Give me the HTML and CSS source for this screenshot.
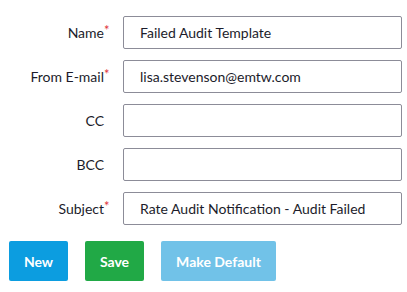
FILE: index.html
```html
<!DOCTYPE html>
<html>
<head>
<meta charset="utf-8">
<link rel="stylesheet" href="styles.css">
</head>
<body>
<form class="form">
  <div class="row">
    <label class="label">Name<span class="req">*</span></label>
    <input class="field" type="text" value="Failed Audit Template">
  </div>
  <div class="row">
    <label class="label">From E-mail<span class="req">*</span></label>
    <input class="field" type="text" value="lisa.stevenson@emtw.com">
  </div>
  <div class="row">
    <label class="label">CC</label>
    <input class="field" type="text" value="">
  </div>
  <div class="row">
    <label class="label">BCC</label>
    <input class="field" type="text" value="">
  </div>
  <div class="row">
    <label class="label">Subject<span class="req">*</span></label>
    <input class="field" type="text" value="Rate Audit Notification - Audit Failed">
  </div>
  <div class="actions">
    <button type="button" class="btn btn-new">New</button>
    <button type="button" class="btn btn-save">Save</button>
    <button type="button" class="btn btn-default">Make Default</button>
  </div>
</form>
</body>
</html>
```
FILE: styles.css
```css
html, body {
  margin: 0;
  padding: 0;
  background: #ffffff;
}
body {
  font-family: Lato, "Open Sans", sans-serif;
  color: #1c1c2b;
}
.form {
  display: flex;
  flex-direction: column;
  gap: 11px;
  padding: 16px 5px 0 9px;
}
.row {
  display: flex;
  align-items: center;
  gap: 18px;
}
.label {
  position: relative;
  width: 95px;
  text-align: right;
  font-size: 14px;
}
.req {
  position: absolute;
  left: 100%;
  top: -2px;
  color: #e0323a;
  font-size: 13px;
}
.field {
  box-sizing: border-box;
  width: 279px;
  height: 33px;
  border: 1px solid #8c8c98;
  border-radius: 2px;
  padding: 0 16px;
  font-family: Lato, "Open Sans", sans-serif;
  font-size: 14px;
  color: #1c1c2b;
  background: #fff;
  outline: none;
}
.label + .field {
  margin-left: 1px;
}
.actions {
  display: flex;
  gap: 17px;
  margin-top: 5px;
}
.btn {
  height: 40px;
  border: none;
  border-radius: 2px;
  color: #fff;
  font-family: Lato, "Open Sans", sans-serif;
  font-weight: 700;
  font-size: 14px;
  padding: 0;
  cursor: pointer;
}
.btn-new {
  width: 59px;
  background: #0c9de0;
}
.btn-save {
  width: 59px;
  background: #21a946;
}
.btn-default {
  width: 115px;
  background: #71c2e8;
}
```
